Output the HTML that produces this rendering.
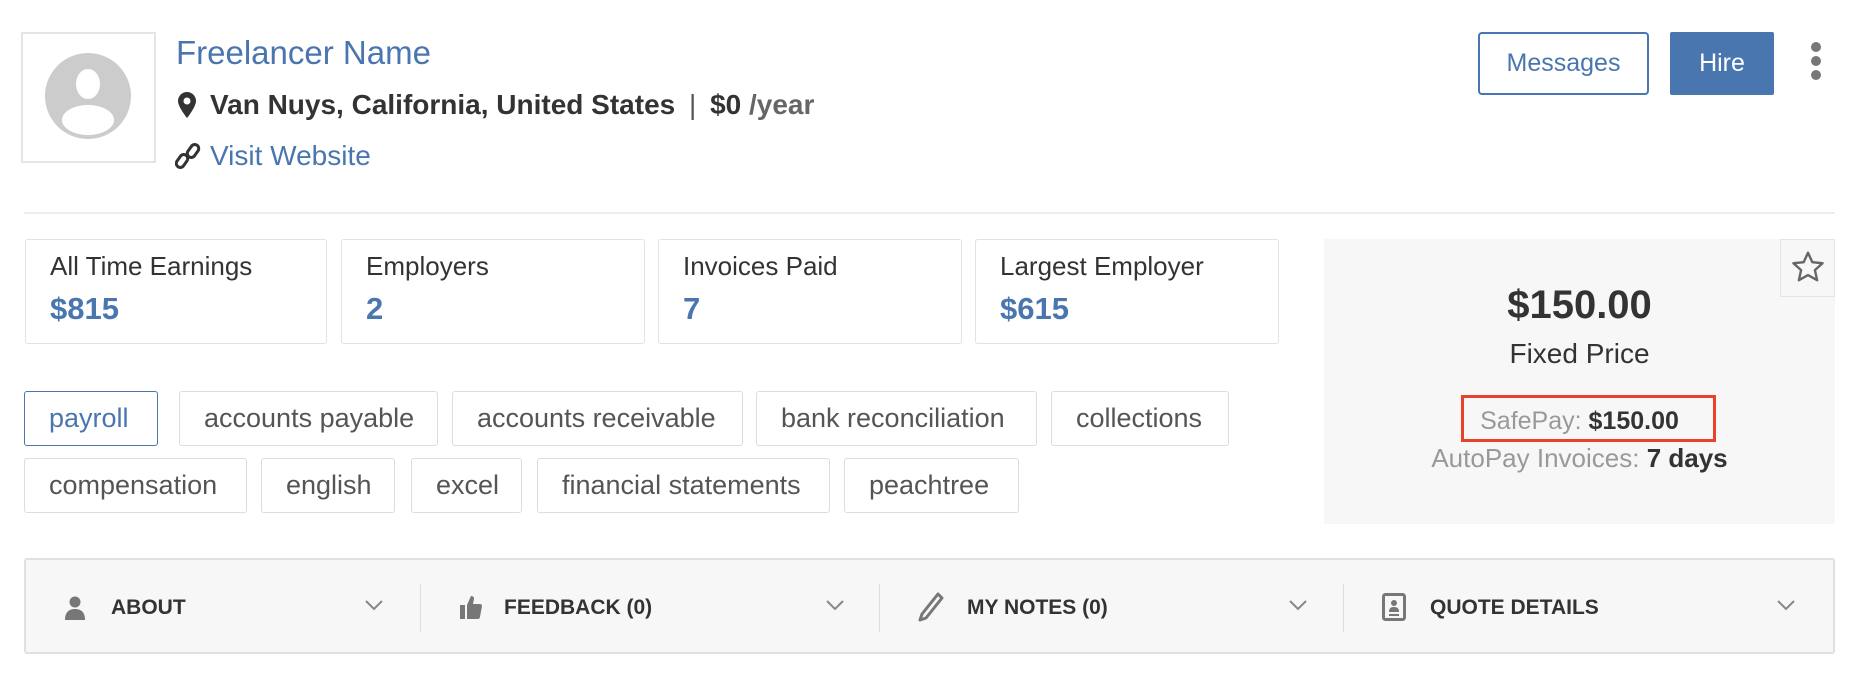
<!DOCTYPE html>
<html><head><meta charset="utf-8"><style>
*{box-sizing:border-box;margin:0;padding:0}
body{width:1862px;height:678px;background:#fff;font-family:"Liberation Sans",sans-serif;color:#333;position:relative;overflow:hidden}
.a{position:absolute}
.card{position:absolute;top:239px;height:105px;border:1px solid #e2e2e2;border-radius:3px;padding:10px 0 0 24px}
.card .l{font-size:26px;color:#333;line-height:32px}
.card .v{font-size:31px;font-weight:bold;color:#4a76b0;line-height:38px;margin-top:8px}
.tag{position:absolute;height:55px;border:1px solid #ddd;border-radius:3px;font-size:27px;color:#555;line-height:53px;padding-left:24px;white-space:nowrap}
.sec{position:absolute;top:595px;font-size:21px;font-weight:bold;color:#333;line-height:26px}
.chev{position:absolute;top:598px}
.div{position:absolute;top:584px;width:1px;height:48px;background:#ddd}
</style></head><body>
<div class="a" style="left:21px;top:32px;width:135px;height:131px;border:2px solid #e5e5e5;background:#fff">
<svg width="131" height="127" viewBox="0 0 131 127"><circle cx="65" cy="62" r="43" fill="#ccc"/><ellipse cx="65" cy="50" rx="12" ry="15" fill="#fff"/><ellipse cx="65" cy="86" rx="26" ry="15" fill="#fff"/></svg></div>
<div class="a" style="left:176px;top:34px;font-size:33px;color:#4a76b0">Freelancer Name</div>
<svg class="a" style="left:178px;top:92px" width="18" height="26" viewBox="0 0 18 26"><path d="M9 0C4 0 0 4 0 9c0 6 9 17 9 17s9-11 9-17C18 4 14 0 9 0z" fill="#333"/><circle cx="9" cy="9" r="3.5" fill="#fff"/></svg>
<div class="a" style="left:210px;top:89px;font-size:28px;font-weight:bold;color:#333">Van Nuys, California, United States <span style="font-weight:normal;color:#555;margin:0 6px">|</span> $0 <span style="color:#666">/year</span></div>
<svg class="a" style="left:175px;top:142px" width="26" height="28" viewBox="0 0 26 28" fill="none" stroke="#333" stroke-width="3"><rect x="3" y="12" width="8" height="14" rx="4" transform="rotate(35 7 19)"/><rect x="14" y="2" width="8" height="14" rx="4" transform="rotate(35 18 9)"/></svg>
<div class="a" style="left:210px;top:140px;font-size:28px;color:#4a76b0">Visit Website</div>
<div class="a" style="left:1478px;top:32px;width:171px;height:63px;border:2px solid #4a76b0;border-radius:4px;color:#4a76b0;font-size:25px;text-align:center;line-height:59px">Messages</div>
<div class="a" style="left:1670px;top:32px;width:104px;height:63px;background:#4a76b0;border-radius:2px;color:#fff;font-size:25px;text-align:center;line-height:63px">Hire</div>
<svg class="a" style="left:1806px;top:40px" width="20" height="44"><circle cx="10" cy="7" r="5" fill="#777"/><circle cx="10" cy="21" r="5" fill="#777"/><circle cx="10" cy="35" r="5" fill="#777"/></svg>
<div class="a" style="left:24px;top:212px;width:1811px;height:2px;background:#eee"></div>
<div class="card" style="left:25px;width:302px"><div class="l">All Time Earnings</div><div class="v">$815</div></div>
<div class="card" style="left:341px;width:304px"><div class="l">Employers</div><div class="v">2</div></div>
<div class="card" style="left:658px;width:304px"><div class="l">Invoices Paid</div><div class="v">7</div></div>
<div class="card" style="left:975px;width:304px"><div class="l">Largest Employer</div><div class="v">$615</div></div>
<div class="a" style="left:1324px;top:239px;width:511px;height:285px;background:#f7f7f7"></div>
<div class="a" style="left:1780px;top:239px;width:55px;height:58px;border:1px solid #e5e5e5"></div>
<svg class="a" style="left:1790px;top:249px" width="36" height="36" viewBox="0 0 24 24"><path d="M12 2.5l2.9 6.3 6.8.7-5.1 4.6 1.5 6.7L12 17.4l-6.1 3.4 1.5-6.7-5.1-4.6 6.8-.7z" fill="none" stroke="#666" stroke-width="1.6" stroke-linejoin="round"/></svg>
<div class="a" style="left:1324px;top:283px;width:511px;text-align:center;font-size:40px;font-weight:bold;color:#333">$150.00</div>
<div class="a" style="left:1324px;top:338px;width:511px;text-align:center;font-size:28px;color:#333">Fixed Price</div>
<div class="a" style="left:1461px;top:395px;width:255px;height:47px;border:3px solid #e8412c"></div>
<div class="a" style="left:1324px;top:407px;width:511px;text-align:center;font-size:25px;color:#999">SafePay: <b style="color:#333">$150.00</b></div>
<div class="a" style="left:1324px;top:443px;width:511px;text-align:center;font-size:26px;color:#999">AutoPay Invoices: <b style="color:#333">7 days</b></div>
<div class="tag" style="left:24px;top:391px;width:134px;border-color:#4a76b0;color:#4a76b0">payroll</div>
<div class="tag" style="left:179px;top:391px;width:259px">accounts payable</div>
<div class="tag" style="left:452px;top:391px;width:291px">accounts receivable</div>
<div class="tag" style="left:756px;top:391px;width:281px">bank reconciliation</div>
<div class="tag" style="left:1051px;top:391px;width:178px">collections</div>
<div class="tag" style="left:24px;top:458px;width:223px">compensation</div>
<div class="tag" style="left:261px;top:458px;width:134px">english</div>
<div class="tag" style="left:411px;top:458px;width:111px">excel</div>
<div class="tag" style="left:537px;top:458px;width:293px">financial statements</div>
<div class="tag" style="left:844px;top:458px;width:175px">peachtree</div>
<div class="a" style="left:24px;top:558px;width:1811px;height:96px;background:#f7f7f7;border:2px solid #e0e0e0;border-radius:3px"></div>
<div class="div" style="left:420px"></div><div class="div" style="left:879px"></div><div class="div" style="left:1343px"></div>
<svg class="a" style="left:64px;top:596px" width="22" height="24" viewBox="0 0 22 24"><circle cx="11" cy="6" r="5.5" fill="#777"/><path d="M1 24c0-8 4-11 10-11s10 3 10 11z" fill="#777"/></svg>
<div class="sec" style="left:111px">ABOUT</div>
<svg class="a" style="left:460px;top:595px" width="22" height="26" viewBox="0 0 22 26"><rect x="0" y="10" width="5" height="14" fill="#777"/><path d="M7 10l4-9c2 0 3 1 3 3l-1 5h7c1 0 2 1 2 2l-2 11c0 1-1 2-2 2H7z" fill="#777"/></svg>
<div class="sec" style="left:504px">FEEDBACK (0)</div>
<svg class="a" style="left:918px;top:592px" width="26" height="30" viewBox="0 0 26 30"><path d="M20 2l4 4L8 26l-6 2 2-6z" fill="none" stroke="#777" stroke-width="3" stroke-linejoin="round"/></svg>
<div class="sec" style="left:967px">MY NOTES (0)</div>
<svg class="a" style="left:1382px;top:593px" width="24" height="28" viewBox="0 0 24 28"><rect x="1.5" y="1.5" width="21" height="25" rx="2" fill="none" stroke="#777" stroke-width="3"/><circle cx="12" cy="10" r="3" fill="#777"/><path d="M7 19c0-4 2-5 5-5s5 1 5 5z" fill="#777"/><rect x="7" y="21" width="10" height="2" fill="#777"/></svg>
<div class="sec" style="left:1430px">QUOTE DETAILS</div>
<svg class="chev" style="left:364px" width="20" height="14"><path d="M2 3l8 8 8-8" fill="none" stroke="#888" stroke-width="2"/></svg>
<svg class="chev" style="left:825px" width="20" height="14"><path d="M2 3l8 8 8-8" fill="none" stroke="#888" stroke-width="2"/></svg>
<svg class="chev" style="left:1288px" width="20" height="14"><path d="M2 3l8 8 8-8" fill="none" stroke="#888" stroke-width="2"/></svg>
<svg class="chev" style="left:1776px" width="20" height="14"><path d="M2 3l8 8 8-8" fill="none" stroke="#888" stroke-width="2"/></svg>
</body></html>
